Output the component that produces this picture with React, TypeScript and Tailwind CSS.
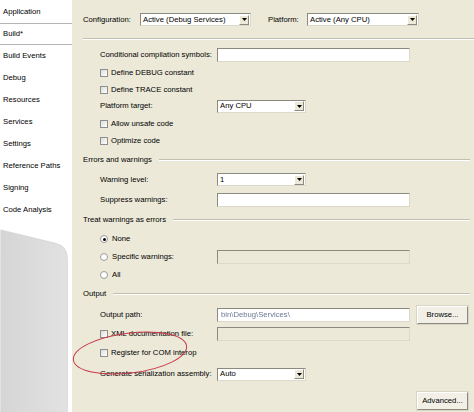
import React from 'react';

const sunken =
  'border border-t-[#8c8a7e] border-l-[#8c8a7e] border-r-[#dcd9cb] border-b-[#dcd9cb]';

const Arrow = () => (
  <span className="ml-auto mr-px flex h-[10px] w-[10px] items-center justify-center border border-t-white border-l-white border-r-[#8c8a7e] border-b-[#8c8a7e] bg-[#ece9d8]">
    <svg width="5" height="3" viewBox="0 0 5 3">
      <path d="M0 0h5L2.5 3z" fill="#000" />
    </svg>
  </span>
);

const Select = ({ value, className }: { value: string; className: string }) => (
  <div className={`flex h-[13px] items-center bg-white ${sunken} ${className}`}>
    <span className="pl-[2px] leading-none">{value}</span>
    <Arrow />
  </div>
);

const TextBox = ({ disabled, children }: { disabled?: boolean; children?: React.ReactNode }) => (
  <div
    className={`flex h-[14px] w-[193px] items-center overflow-hidden ${sunken} ${
      disabled ? 'bg-[#ece9d8]' : 'bg-white'
    }`}
  >
    {children}
  </div>
);

const Check = () => (
  <span className="mr-[3px] h-[8px] w-[8px] border border-[#8e8e8e] bg-gradient-to-br from-[#dcdcd6] to-white" />
);

const Radio = ({ on }: { on?: boolean }) => (
  <span className="mr-[4px] flex h-[8px] w-[8px] items-center justify-center rounded-full border border-[#9a9a9a] bg-white">
    {on && <span className="h-[3px] w-[3px] rounded-full bg-black" />}
  </span>
);

const Header = ({ label, h }: { label: string; h: string }) => (
  <div className={`flex items-center pl-[11px] pr-[4px] ${h}`}>
    <span className="leading-none">{label}</span>
    <div className="ml-[7px] flex-1 border-t border-b border-t-[#c2bfae] border-b-white" />
  </div>
);

const Row = ({ h, children }: { h: string; children: React.ReactNode }) => (
  <div className={`flex items-center pl-[28px] ${h}`}>{children}</div>
);

const Label = ({ children }: { children: React.ReactNode }) => (
  <span className="w-[117px] shrink-0 leading-none">{children}</span>
);

const navItems = [
  'Application',
  'Build*',
  'Build Events',
  'Debug',
  'Resources',
  'Services',
  'Settings',
  'Reference Paths',
  'Signing',
  'Code Analysis',
];

export default function App() {
  return (
    <div className="relative flex h-[412px] w-[474px] overflow-hidden bg-white font-['Liberation_Sans',Arial,sans-serif] text-[7.7px] text-black">
      {/* property page tabs */}
      <aside className="flex w-[72px] shrink-0 flex-col bg-white pt-[1px]">
        {navItems.map((item) => (
          <div
            key={item}
            className={`flex h-[22.5px] items-center pl-[3px] leading-none ${
              item === 'Build*' ? 'border-y border-[#b4b4b4]' : ''
            }`}
          >
            {item}
          </div>
        ))}
        <svg width="72" height="190" viewBox="0 0 72 190" className="mt-[5px]">
          <defs>
            <linearGradient id="tabg" x1="0" y1="0" x2="1" y2="0">
              <stop offset="0" stopColor="#d5d5d5" />
              <stop offset="1" stopColor="#e2e2e2" />
            </linearGradient>
          </defs>
          <path d="M0 4 L57 18 Q68 21 68 33 L68 190 L0 190 Z" fill="url(#tabg)" stroke="#cfcfcf" strokeWidth="0.7" />
        </svg>
      </aside>

      {/* build page */}
      <main className="flex flex-1 flex-col bg-[#ece9d8]">
        <div className="mt-[13px] flex h-[13px] items-center pl-[11px]">
          <span className="w-[57px] leading-none">Configuration:</span>
          <Select value="Active (Debug Services)" className="w-[111px]" />
          <span className="ml-[17px] w-[39px] leading-none">Platform:</span>
          <Select value="Active (Any CPU)" className="w-[112px]" />
        </div>
        <div className="ml-[11px] mt-[12px] border-t border-b border-t-[#c2bfae] border-b-white" />

        <div className="mt-[6px]" />
        <Row h="h-[18.5px]">
          <Label>Conditional compilation symbols:</Label>
          <TextBox />
        </Row>
        <Row h="h-[17px]">
          <Check />
          <span className="leading-none">Define DEBUG constant</span>
        </Row>
        <Row h="h-[16px]">
          <Check />
          <span className="leading-none">Define TRACE constant</span>
        </Row>
        <Row h="h-[17.5px]">
          <Label>Platform target:</Label>
          <Select value="Any CPU" className="w-[89px]" />
        </Row>
        <Row h="h-[17px]">
          <Check />
          <span className="leading-none">Allow unsafe code</span>
        </Row>
        <Row h="h-[17.5px]">
          <Check />
          <span className="leading-none">Optimize code</span>
        </Row>

        <Header label="Errors and warnings" h="h-[20px]" />
        <Row h="h-[20.5px]">
          <Label>Warning level:</Label>
          <Select value="1" className="w-[89px]" />
        </Row>
        <Row h="h-[20px]">
          <Label>Suppress warnings:</Label>
          <TextBox />
        </Row>

        <Header label="Treat warnings as errors" h="h-[19.5px]" />
        <Row h="h-[19px]">
          <Radio on />
          <span className="leading-none">None</span>
        </Row>
        <Row h="h-[17.5px]">
          <Radio />
          <span className="w-[105px] leading-none">Specific warnings:</span>
          <TextBox disabled />
        </Row>
        <Row h="h-[17.5px]">
          <Radio />
          <span className="leading-none">All</span>
        </Row>

        <Header label="Output" h="h-[21px]" />
        <Row h="h-[20.5px]">
          <Label>Output path:</Label>
          <TextBox>
            <span className="pl-[3px] leading-none text-[#6a7794] blur-[0.5px]">bin\Debug\Services\</span>
          </TextBox>
          <button className="ml-[7px] flex h-[18px] w-[51px] items-center justify-center border border-t-white border-l-white border-r-[#8c8a7e] border-b-[#8c8a7e] bg-[#f2f0e6] leading-none shadow-[0_0_0_1px_#d8d5c6]">
            Browse...
          </button>
        </Row>
        <Row h="h-[18px]">
          <Check />
          <span className="w-[106px] leading-none">XML documentation file:</span>
          <TextBox disabled />
        </Row>
        <Row h="h-[19px]">
          <Check />
          <span className="leading-none">Register for COM interop</span>
        </Row>
        <Row h="h-[24.5px]">
          <Label>Generate serialization assembly:</Label>
          <Select value="Auto" className="w-[89px]" />
        </Row>

        <div className="mt-[5.5px] flex justify-end pr-[6px]">
          <button className="flex h-[18px] w-[51px] items-center justify-center border border-t-white border-l-white border-r-[#8c8a7e] border-b-[#8c8a7e] bg-[#f2f0e6] leading-none shadow-[0_0_0_1px_#d8d5c6]">
            Advanced...
          </button>
        </div>
      </main>

      {/* hand-drawn annotation */}
      <svg
        className="pointer-events-none absolute left-0 top-0"
        width="474"
        height="412"
        viewBox="0 0 474 412"
      >
        <ellipse
          cx="130"
          cy="353"
          rx="57"
          ry="20"
          transform="rotate(-7 130 353)"
          fill="none"
          stroke="#c8394a"
          strokeWidth="1"
        />
      </svg>
    </div>
  );
}
